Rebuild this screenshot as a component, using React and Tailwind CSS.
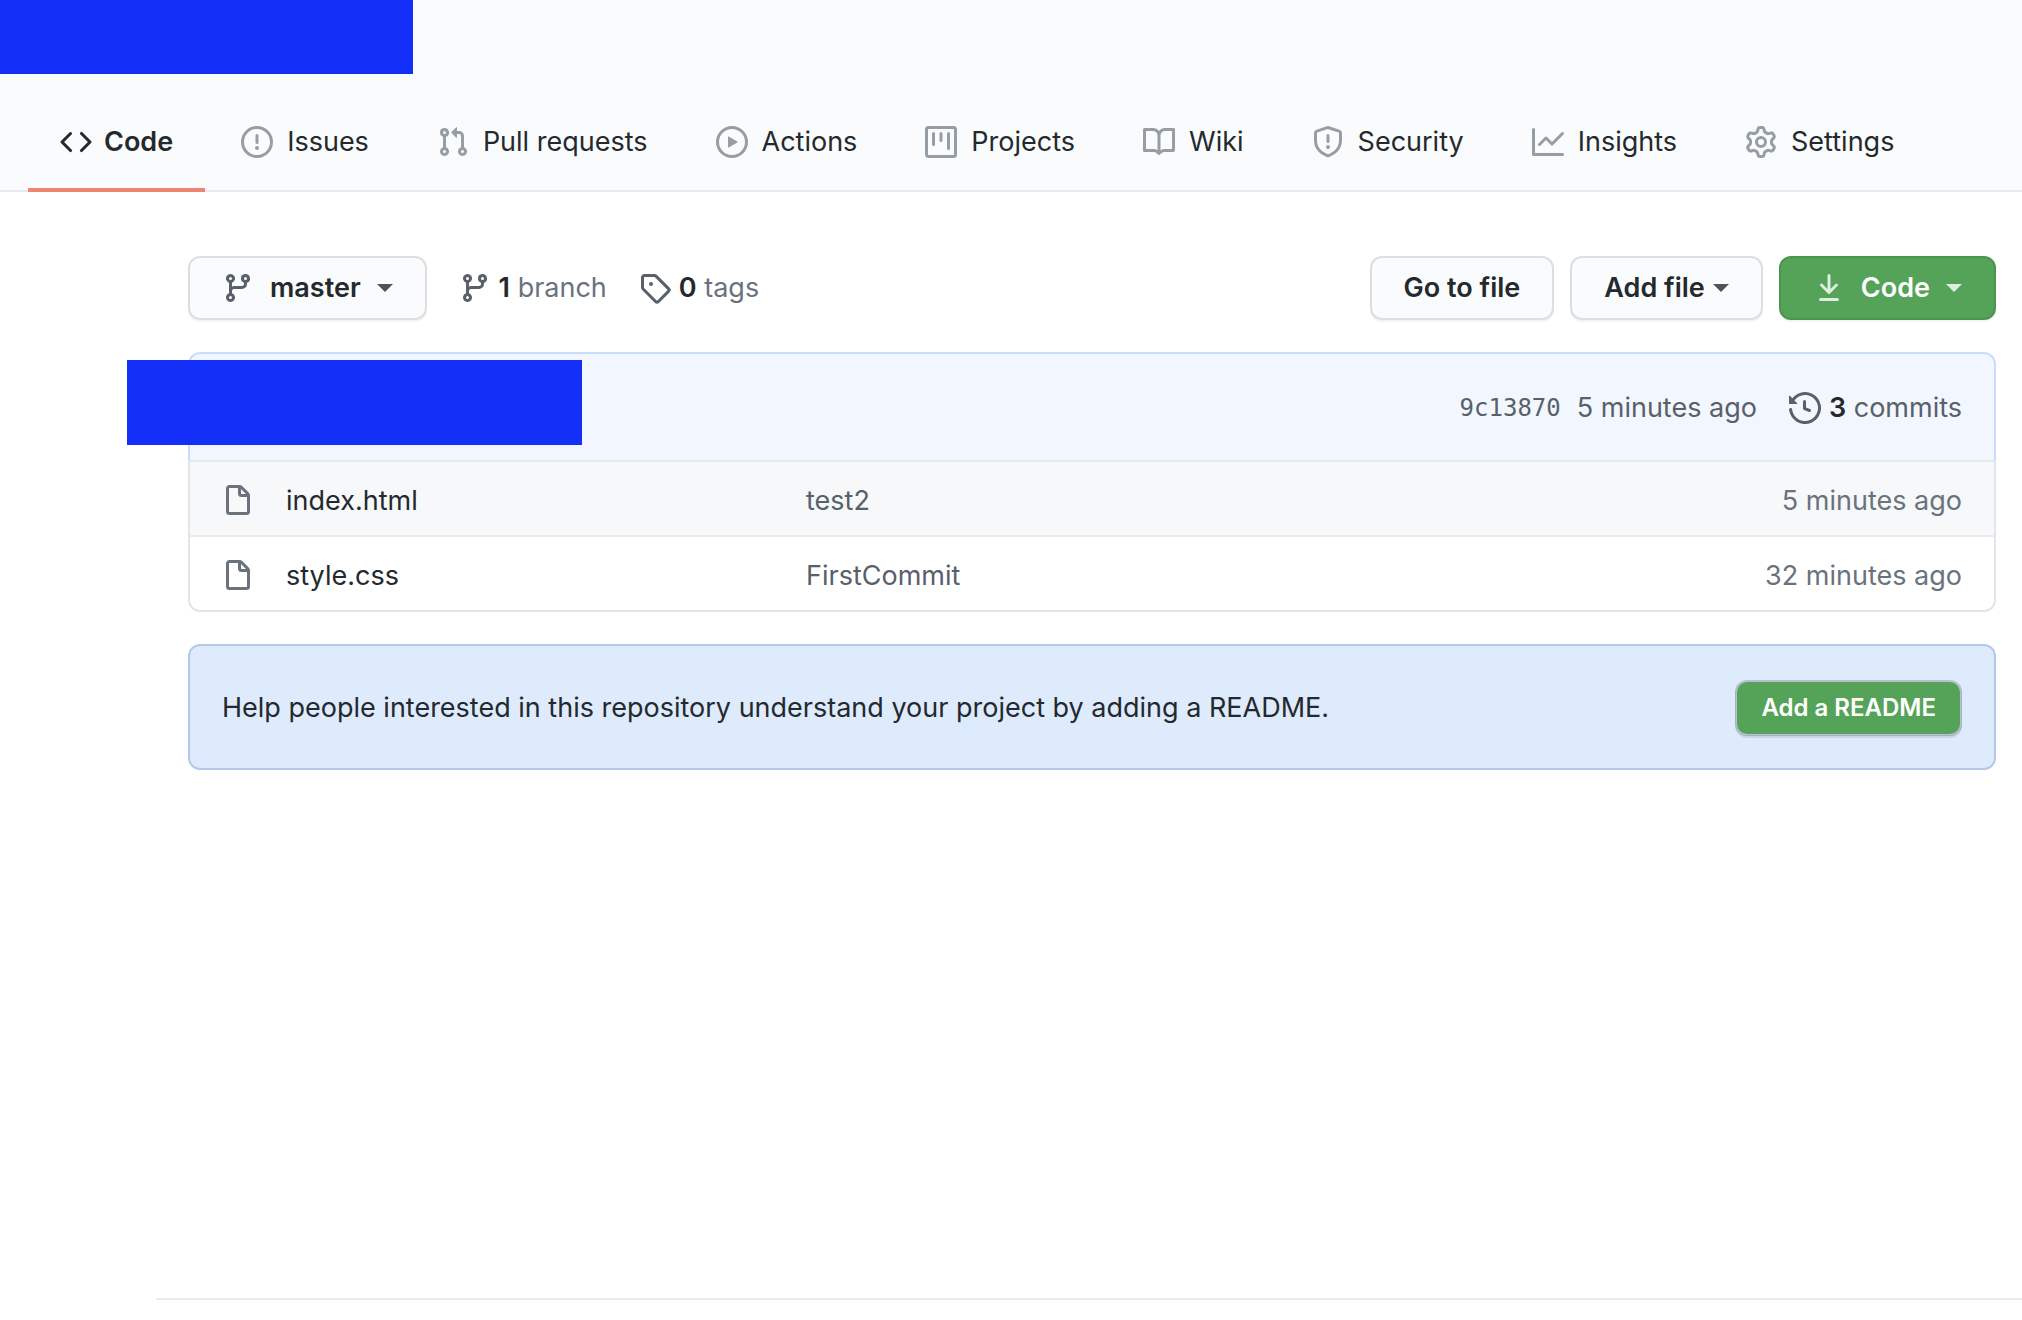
import { clsx } from 'clsx';

const ICONS = {
  code: 'M4.72 3.22a.75.75 0 011.06 1.06L2.06 8l3.72 3.72a.75.75 0 11-1.06 1.06L.47 8.53a.75.75 0 010-1.06l4.25-4.25zm6.56 0a.75.75 0 10-1.06 1.06L13.94 8l-3.72 3.72a.75.75 0 101.06 1.06l4.25-4.25a.75.75 0 000-1.06l-4.25-4.25z',
  issue: 'M8 1.5a6.5 6.5 0 100 13 6.5 6.5 0 000-13zM0 8a8 8 0 1116 0A8 8 0 010 8zm9 3a1 1 0 11-2 0 1 1 0 012 0zm-.25-6.25a.75.75 0 00-1.5 0v3.5a.75.75 0 001.5 0v-3.5z',
  pull: 'M7.177 3.073L9.573.677A.25.25 0 0110 .854v4.792a.25.25 0 01-.427.177L7.177 3.427a.25.25 0 010-.354zM3.75 2.5a.75.75 0 100 1.5.75.75 0 000-1.5zm-2.25.75a2.25 2.25 0 113 2.122v5.256a2.251 2.251 0 11-1.5 0V5.372A2.25 2.25 0 011.5 3.25zM11 2.5h-1V4h1a1 1 0 011 1v5.628a2.251 2.251 0 101.5 0V5A2.5 2.5 0 0011 2.5zm1 10.25a.75.75 0 111.5 0 .75.75 0 01-1.5 0zM3.75 12a.75.75 0 100 1.5.75.75 0 000-1.5z',
  play: 'M1.5 8a6.5 6.5 0 1113 0 6.5 6.5 0 01-13 0zM8 0a8 8 0 100 16A8 8 0 008 0zM6.379 5.227A.25.25 0 006 5.442v5.117a.25.25 0 00.379.214l4.264-2.559a.25.25 0 000-.428L6.379 5.227z',
  project: 'M1.75 0A1.75 1.75 0 000 1.75v12.5C0 15.216.784 16 1.75 16h12.5A1.75 1.75 0 0016 14.25V1.75A1.75 1.75 0 0014.25 0H1.75zM1.5 1.75a.25.25 0 01.25-.25h12.5a.25.25 0 01.25.25v12.5a.25.25 0 01-.25.25H1.75a.25.25 0 01-.25-.25V1.75zM11.75 3a.75.75 0 00-.75.75v7.5a.75.75 0 001.5 0v-7.5a.75.75 0 00-.75-.75zm-8.25.75a.75.75 0 011.5 0v5.5a.75.75 0 01-1.5 0v-5.5zM8 3a.75.75 0 00-.75.75v3.5a.75.75 0 001.5 0v-3.5A.75.75 0 008 3z',
  book: 'M0 1.75A.75.75 0 01.75 1h4.253c1.227 0 2.317.59 3 1.501A3.744 3.744 0 0111.006 1h4.245a.75.75 0 01.75.75v10.5a.75.75 0 01-.75.75h-4.507a2.25 2.25 0 00-1.591.659l-.622.621a.75.75 0 01-1.06 0l-.622-.621A2.25 2.25 0 005.258 13H.75a.75.75 0 01-.75-.75V1.75zm8.755 3a2.25 2.25 0 012.25-2.25H14.5v9h-3.757c-.71 0-1.4.201-1.992.572l.004-7.322zm-1.504 7.324l.004-5.073-.002-2.253A2.25 2.25 0 005.003 2.5H1.5v9h3.757a3.75 3.75 0 011.994.574z',
  shield: 'M7.467.133a1.75 1.75 0 011.066 0l5.25 1.68A1.75 1.75 0 0115 3.48V7c0 1.566-.32 3.182-1.303 4.682-.983 1.498-2.585 2.813-5.032 3.855a1.7 1.7 0 01-1.33 0c-2.447-1.042-4.049-2.357-5.032-3.855C1.32 10.182 1 8.566 1 7V3.48a1.75 1.75 0 011.217-1.667l5.25-1.68zm.61 1.429a.25.25 0 00-.153 0l-5.25 1.68a.25.25 0 00-.174.238V7c0 1.358.275 2.666 1.057 3.86.784 1.194 2.121 2.34 4.366 3.297a.2.2 0 00.154 0c2.245-.956 3.582-2.104 4.366-3.298C13.225 9.666 13.5 8.36 13.5 7V3.48a.25.25 0 00-.174-.237l-5.25-1.68zM9 10.5a1 1 0 11-2 0 1 1 0 012 0zm-.25-5.75a.75.75 0 10-1.5 0v3a.75.75 0 001.5 0v-3z',
  graph: 'M1.5 1.75a.75.75 0 00-1.5 0v12.5c0 .414.336.75.75.75h14.5a.75.75 0 000-1.5H1.5V1.75zm14.28 2.53a.75.75 0 00-1.06-1.06L10 7.94 7.53 5.47a.75.75 0 00-1.06 0L3.22 8.72a.75.75 0 001.06 1.06L7 7.06l2.47 2.47a.75.75 0 001.06 0l5.25-5.25z',
  gear: 'M7.429 1.525a6.593 6.593 0 011.142 0c.036.003.108.036.137.146l.289 1.105c.147.56.55.967.997 1.189.174.086.341.183.501.29.417.278.97.423 1.53.27l1.102-.303c.11-.03.175.016.195.046.219.31.41.641.573.989.014.031.022.11-.059.19l-.815.806c-.411.406-.562.957-.53 1.456a4.588 4.588 0 010 .582c-.032.499.119 1.05.53 1.456l.815.806c.08.08.073.159.059.19a6.494 6.494 0 01-.573.99c-.02.029-.086.074-.195.045l-1.103-.303c-.559-.153-1.112-.008-1.529.27-.16.107-.327.204-.5.29-.449.222-.851.628-.998 1.189l-.289 1.105c-.029.11-.101.143-.137.146a6.613 6.613 0 01-1.142 0c-.036-.003-.108-.037-.137-.146l-.289-1.105c-.147-.56-.55-.967-.997-1.189a4.502 4.502 0 01-.501-.29c-.417-.278-.97-.423-1.53-.27l-1.102.303c-.11.03-.175-.016-.195-.046a6.492 6.492 0 01-.573-.989c-.014-.031-.022-.11.059-.19l.815-.806c.411-.406.562-.957.53-1.456a4.587 4.587 0 010-.582c.032-.499-.119-1.05-.53-1.456l-.815-.806c-.08-.08-.073-.159-.059-.19a6.44 6.44 0 01.573-.99c.02-.029.086-.075.195-.045l1.103.303c.559.153 1.112.008 1.529-.27.16-.107.327-.204.5-.29.449-.222.851-.628.998-1.189l.289-1.105c.029-.11.101-.143.137-.146zM8 0c-.236 0-.47.01-.701.03-.743.065-1.29.615-1.458 1.261l-.29 1.106c-.017.066-.078.158-.211.224a5.994 5.994 0 00-.668.386c-.123.082-.233.09-.3.071L3.27 2.776c-.644-.177-1.392.02-1.82.63a7.977 7.977 0 00-.704 1.217c-.315.675-.111 1.422.363 1.891l.815.806c.05.048.098.147.088.294a6.084 6.084 0 000 .772c.01.147-.038.246-.088.294l-.815.806c-.474.469-.678 1.216-.363 1.891.2.428.436.835.704 1.218.428.609 1.176.806 1.82.63l1.103-.303c.066-.019.176-.011.299.071.213.143.436.272.668.386.133.066.194.158.212.224l.289 1.106c.169.646.715 1.196 1.458 1.26a8.094 8.094 0 001.402 0c.743-.064 1.29-.614 1.458-1.26l.29-1.106c.017-.066.078-.158.211-.224a5.98 5.98 0 00.668-.386c.123-.082.233-.09.3-.071l1.102.302c.644.177 1.392-.02 1.82-.63.268-.382.505-.789.704-1.217.315-.675.111-1.422-.364-1.891l-.814-.806c-.05-.048-.098-.147-.088-.294a6.1 6.1 0 000-.772c-.01-.147.039-.246.088-.294l.814-.806c.475-.469.679-1.216.364-1.891a7.992 7.992 0 00-.704-1.218c-.428-.609-1.176-.806-1.82-.63l-1.103.303c-.066.019-.176.011-.299-.071a5.991 5.991 0 00-.668-.386c-.133-.066-.194-.158-.212-.224L10.16 1.29C9.99.645 9.444.095 8.701.031A8.094 8.094 0 008 0zm1.5 8a1.5 1.5 0 11-3 0 1.5 1.5 0 013 0zM11 8a3 3 0 11-6 0 3 3 0 016 0z',
  branch: 'M11.75 2.5a.75.75 0 100 1.5.75.75 0 000-1.5zm-2.25.75a2.25 2.25 0 113 2.122V6A2.5 2.5 0 0110 8.5H6a1 1 0 00-1 1v1.128a2.251 2.251 0 11-1.5 0V5.372a2.25 2.25 0 111.5 0v1.836A2.492 2.492 0 016 7h4a1 1 0 001-1v-.628A2.25 2.25 0 019.5 3.25zM4.25 12a.75.75 0 100 1.5.75.75 0 000-1.5zM3.5 3.25a.75.75 0 111.5 0 .75.75 0 01-1.5 0z',
  tag: 'M2.5 7.775V2.75a.25.25 0 01.25-.25h5.025a.25.25 0 01.177.073l6.25 6.25a.25.25 0 010 .354l-5.025 5.025a.25.25 0 01-.354 0l-6.25-6.25a.25.25 0 01-.073-.177zm-1.5 0V2.75C1 1.784 1.784 1 2.75 1h5.025c.464 0 .91.184 1.238.513l6.25 6.25a1.75 1.75 0 010 2.474l-5.026 5.026a1.75 1.75 0 01-2.474 0l-6.25-6.25A1.75 1.75 0 011 7.775zM6 5a1 1 0 100 2 1 1 0 000-2z',
  download: 'M7.47 10.78a.75.75 0 001.06 0l3.75-3.75a.75.75 0 00-1.06-1.06L8.75 8.44V1.75a.75.75 0 00-1.5 0v6.69L4.78 5.97a.75.75 0 00-1.06 1.06l3.75 3.75zM3.75 13a.75.75 0 000 1.5h8.5a.75.75 0 000-1.5h-8.5z',
  history: 'M1.643 3.143L.427 1.927A.25.25 0 000 2.104V5.75c0 .138.112.25.25.25h3.646a.25.25 0 00.177-.427L2.715 4.215a6.5 6.5 0 11-1.18 4.458.75.75 0 10-1.493.154 8.001 8.001 0 101.6-5.684zM7.75 4a.75.75 0 01.75.75v2.992l2.028.812a.75.75 0 01-.557 1.392l-2.5-1A.75.75 0 017 8.25v-3.5A.75.75 0 017.75 4z',
  file: 'M3.75 1.5a.25.25 0 00-.25.25v11.5c0 .138.112.25.25.25h8.5a.25.25 0 00.25-.25V6H9.75A1.75 1.75 0 018 4.25V1.5H3.75zm5.75.56v2.19c0 .138.112.25.25.25h2.19L9.5 2.06zM2 1.75C2 .784 2.784 0 3.75 0h5.086c.464 0 .909.184 1.237.513l3.414 3.414c.329.328.513.773.513 1.237v8.086A1.75 1.75 0 0112.25 15h-8.5A1.75 1.75 0 012 13.25V1.75z',
};

const TABS = [
  { label: 'Code', icon: 'code', active: true },
  { label: 'Issues', icon: 'issue' },
  { label: 'Pull requests', icon: 'pull' },
  { label: 'Actions', icon: 'play' },
  { label: 'Projects', icon: 'project' },
  { label: 'Wiki', icon: 'book' },
  { label: 'Security', icon: 'shield' },
  { label: 'Insights', icon: 'graph' },
  { label: 'Settings', icon: 'gear' },
];

const FILES = [
  { name: 'index.html', message: 'test2', age: '5 minutes ago' },
  { name: 'style.css', message: 'FirstCommit', age: '32 minutes ago' },
];

function Icon({ name, className }) {
  return (
    <svg viewBox="0 0 16 16" fill="currentColor" fillRule="evenodd" aria-hidden="true" className={clsx('size-8 shrink-0', className)}>
      <path d={ICONS[name]} />
    </svg>
  );
}

function Caret({ className }) {
  return (
    <svg viewBox="0 0 16 8" fill="currentColor" aria-hidden="true" className={clsx('h-2 w-4 shrink-0', className)}>
      <path d="M0 0h16L8 8z" />
    </svg>
  );
}

function Button({ className, children }) {
  return (
    <button
      type="button"
      className={clsx('flex h-16 items-center rounded-xl border-2 px-8 font-semibold shadow-[0_2px_0_rgba(27,31,35,0.05)]', className)}
    >
      {children}
    </button>
  );
}

export default function App() {
  return (
    <div className="min-h-screen bg-white font-['Inter',sans-serif] text-[27px] leading-10 text-[#24292e]">
      {/* Repository header */}
      <header className="border-b-2 border-[#e9eaed] bg-[#fafbfc]">
        <div className="h-[74px] w-[413px] bg-[#1430f8]" />
        <nav className="-mb-[2px] flex gap-1 pl-7 pt-[18px]">
          {TABS.map((tab) => (
            <a
              key={tab.label}
              href="#"
              className={clsx(
                'flex h-[100px] items-center whitespace-nowrap border-b-4 px-8 pt-1',
                tab.active ? 'gap-3 border-[#ec8672] font-semibold' : 'gap-[14px] border-transparent'
              )}
            >
              <Icon name={tab.icon} className={tab.active ? 'text-[#24292e]' : 'text-[#959da5]'} />
              {tab.label}
            </a>
          ))}
        </nav>
      </header>

      <main className="pl-[188px] pr-[26px] pt-16">
        {/* Branch picker and file actions */}
        <div className="flex items-center justify-between">
          <div className="flex items-center gap-8">
            <Button className="gap-4 border-[#dcdee0] bg-[#fafbfc]">
              <Icon name="branch" className="text-[#586069]" />
              master
              <Caret className="text-[#4f5356]" />
            </Button>
            <a href="#" className="flex items-center gap-2">
              <Icon name="branch" className="text-[#586069]" />
              <span className="text-[#6a737d]"><strong className="font-semibold text-[#24292e]">1</strong> branch</span>
            </a>
            <a href="#" className="flex items-center gap-2">
              <Icon name="tag" className="text-[#586069]" />
              <span className="text-[#6a737d]"><strong className="font-semibold text-[#24292e]">0</strong> tags</span>
            </a>
          </div>
          <div className="flex items-center gap-4">
            <Button className="border-[#dcdee0] bg-[#fafbfc]">Go to file</Button>
            <Button className="gap-2 border-[#dcdee0] bg-[#fafbfc]">
              Add file
              <Caret className="text-[#4f5356]" />
            </Button>
            <Button className="gap-4 border-[#4b9450] bg-[#55a358] text-white">
              <Icon name="download" className="text-[#ddeede]" />
              Code
              <Caret className="text-[#ddeede]" />
            </Button>
          </div>
        </div>

        {/* Latest commit */}
        <div className="relative mt-8 flex h-[108px] items-center justify-end gap-4 rounded-t-xl border-2 border-b-0 border-[#c8defc] bg-[#f2f7ff] px-8 pt-0.5 text-[#586069]">
          <div className="absolute -left-[63px] top-[6px] h-[85px] w-[455px] bg-[#1430f8]" />
          <a href="#" className="font-['DejaVu_Sans_Mono',monospace] text-2xl">9c13870</a>
          <span>5 minutes ago</span>
          <a href="#" className="ml-4 flex items-center gap-2">
            <Icon name="history" />
            <span><strong className="font-semibold text-[#24292e]">3</strong> commits</span>
          </a>
        </div>

        {/* File list */}
        <div className="overflow-hidden rounded-b-xl border-x-2 border-b-2 border-[#e1e4e8]">
          <table className="w-full table-fixed border-separate border-spacing-0 text-left [&_td]:h-[75px] [&_td]:border-t-2 [&_td]:border-[#e8ebee] [&_td]:pt-1">
            <tbody>
              {FILES.map((file) => (
                <tr key={file.name} className="first:bg-[#f6f8fa]">
                  <td className="w-[96px] pl-8">
                    <Icon name="file" className="text-[#6a737d]" />
                  </td>
                  <td className="w-[520px]"><a href="#">{file.name}</a></td>
                  <td><a href="#" className="text-[#586069]">{file.message}</a></td>
                  <td className="w-[300px] pr-8 text-right text-[#6a737d]">{file.age}</td>
                </tr>
              ))}
            </tbody>
          </table>
        </div>

        {/* Readme prompt */}
        <div className="mt-8 flex h-[126px] items-center justify-between rounded-xl border-2 border-[#b3c9e8] bg-[#deebfd] px-8 pt-0.5">
          <p>Help people interested in this repository understand your project by adding a README.</p>
          <button
            type="button"
            className="h-14 rounded-xl border-2 border-[#1b1f23]/20 bg-[#55a358] bg-clip-padding px-6 text-2xl font-semibold text-white shadow-[0_2px_0_rgba(27,31,35,0.1)]"
          >
            Add a README
          </button>
        </div>
      </main>

      <footer className="ml-[156px] mt-[528px] border-t-2 border-[#eaecef]" />
    </div>
  );
}
